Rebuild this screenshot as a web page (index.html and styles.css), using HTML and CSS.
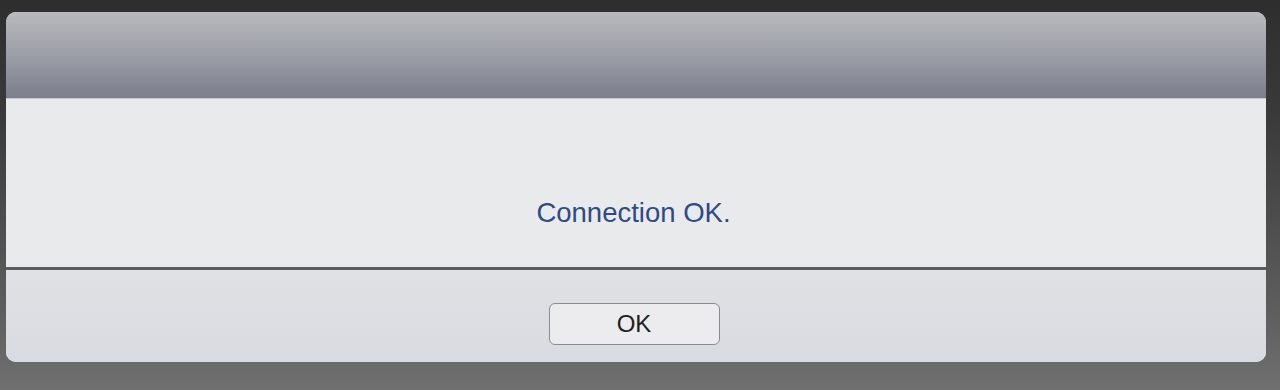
FILE: index.html
```html
<!DOCTYPE html>
<html lang="en">
    <head>
        <meta charset="UTF-8">
        <meta name="viewport" content="width=device-width, initial-scale=1.0">
        <title>Connection</title>
        <link rel="stylesheet" href="styles.css">
    </head>
    <body>
        <article class="dialogo">
            <header class="dialogo-topo"></header>
            <section class="dialogo-mensagem">
                <p>Connection OK.</p>
            </section>
            <footer class="dialogo-rodape">
                <button>OK</button>
            </footer>
        </article>
    </body>
</html>
```

FILE: styles.css
```css
* {
    padding: 0px;
    margin: 0px;
    box-sizing: border-box;
    font-family: "Liberation Sans", Arial, sans-serif;
}

body {
    width: 1280px;
    height: 390px;
    overflow: hidden;
    background: linear-gradient(to bottom, #2e2e2e 0%, #3a3a3a 30%, #5e5e5e 80%, #707070 100%);
    padding: 12px 14px 0 6px;
}

.dialogo {
    display: flex;
    flex-direction: column;
    width: 1260px;
    height: 350px;
    border-radius: 10px;
    overflow: hidden;
    background-color: #e8e9eb;
}

.dialogo-topo {
    height: 87px;
    background: linear-gradient(to bottom, #b9babd 0%, #9c9ea7 50%, #7b7e8b 100%);
    border-bottom: 1px solid #c9cbd0;
}

.dialogo-mensagem {
    height: 171px;
    display: flex;
    align-items: flex-end;
    justify-content: center;
    padding-bottom: 38px;
    padding-right: 5px;
    background-color: #e9eaec;
    border-bottom: 3px solid #5c5c5e;
}

.dialogo-mensagem p {
    font-size: 27.5px;
    color: #2d4b85;
}

.dialogo-rodape {
    flex: 1;
    display: flex;
    justify-content: center;
    padding-top: 33px;
    padding-right: 4px;
    background: linear-gradient(to bottom, #e0e1e4 0%, #d9dbe2 100%);
}

.dialogo-rodape button {
    width: 171px;
    height: 42px;
    border: 1px solid #8a8b8f;
    border-radius: 6px;
    background-color: #ececef;
    font-size: 24px;
    color: #1e1e1e;
}
```
